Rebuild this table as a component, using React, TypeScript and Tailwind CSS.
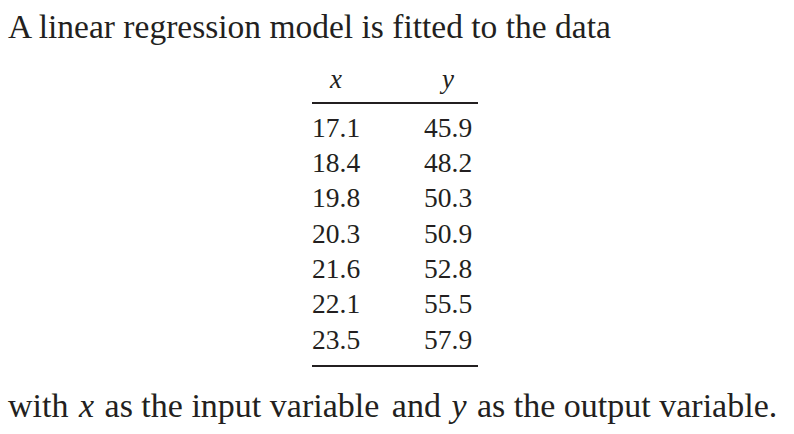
const rows: [string, string][] = [
  ["17.1", "45.9"],
  ["18.4", "48.2"],
  ["19.8", "50.3"],
  ["20.3", "50.9"],
  ["21.6", "52.8"],
  ["22.1", "55.5"],
  ["23.5", "57.9"],
];

export default function App() {
  return (
    <div className="h-[434px] w-[794px] overflow-hidden bg-white font-['Liberation_Serif',serif] text-[#231f20]">
      <p className="pl-[8px] pt-[7px] text-[33.5px] leading-[40px]">
        A linear regression model is fitted to the data
      </p>

      <div className="ml-[312px] mt-[15px] w-[166px]">
        <div className="grid grid-cols-[48px_48px] gap-x-[64px] text-[27px] leading-[35px] italic">
          <span className="text-center">x</span>
          <span className="text-center">y</span>
        </div>
        <div className="mt-[5px] h-[2px] bg-[#231f20]" />
        <div className="mt-[5.6px] grid grid-cols-[48px_48px] gap-x-[64px] text-[27.5px] leading-[35.33px]">
          {rows.map(([x, y]) => (
            <div key={x} className="contents">
              <span>{x}</span>
              <span>{y}</span>
            </div>
          ))}
        </div>
        <div className="mt-[8px] h-[2px] bg-[#231f20]" />
      </div>

      <p className="mt-[21px] pl-[8px] text-[34px] leading-[36px]">
        with <span className="mx-[2px] italic">x</span> as the input variable{" "}
        <span className="ml-[4px]">and</span> <span className="mx-[2px] italic">y</span> as the output
        variable.
      </p>
    </div>
  );
}
